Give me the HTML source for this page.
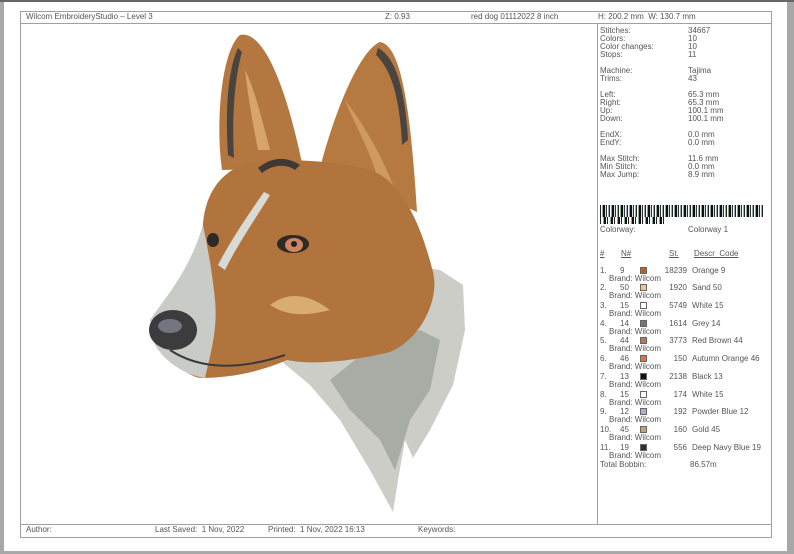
<!DOCTYPE html>
<html><head><meta charset="utf-8"><style>
*{margin:0;padding:0;box-sizing:border-box}
body{width:794px;height:554px;background:#a8a8a8;position:relative;overflow:hidden;font-family:"Liberation Sans",sans-serif;font-size:8px;color:#555}
#page{position:absolute;left:4px;top:2px;width:783px;height:549px;background:#fff}
.t{position:absolute;white-space:nowrap;line-height:8px}
.r{position:absolute;white-space:nowrap;line-height:8px;left:650px;width:37px;text-align:right}
.ln{position:absolute;background:#a0a0a0}
.sw{position:absolute;width:7px;height:7px;border:1px solid #666}
</style></head><body>
<div style="position:absolute;left:0;top:0;width:794px;height:2px;background:#666"></div>
<div id="page"></div>
<div style="position:absolute;left:20px;top:11px;width:752px;height:527px;border:1px solid #a0a0a0"></div>
<div class="ln" style="left:20px;top:23px;width:752px;height:1px"></div>
<div class="ln" style="left:20px;top:524px;width:752px;height:1px"></div>
<div class="ln" style="left:597px;top:23px;width:1px;height:501px"></div>
<div class="t" style="left:26px;top:13px">Wilcom EmbroideryStudio – Level 3</div>
<div class="t" style="left:385px;top:13px">Z: 0.93</div>
<div class="t" style="left:471px;top:13px">red dog 01112022 8 inch</div>
<div class="t" style="left:598px;top:13px">H: 200.2 mm&nbsp;&nbsp;W: 130.7 mm</div>

<div class="t" style="left:600px;top:27px;line-height:8px">Stitches:<br>Colors:<br>Color changes:<br>Stops:<br><br>Machine:<br>Trims:<br><br>Left:<br>Right:<br>Up:<br>Down:<br><br>EndX:<br>EndY:<br><br>Max Stitch:<br>Min Stitch:<br>Max Jump:</div>
<div class="t" style="left:688px;top:27px;line-height:8px">34667<br>10<br>10<br>11<br><br>Tajima<br>43<br><br>65.3 mm<br>65.3 mm<br>100.1 mm<br>100.1 mm<br><br>0.0 mm<br>0.0 mm<br><br>11.6 mm<br>0.0 mm<br>8.9 mm</div>

<div style="position:absolute;left:600px;top:205px;width:164px;height:12px;background:repeating-linear-gradient(90deg,#222 0 1px,#fff 1px 2px,#8a9 2px 3px,#111 3px 5px,#cdd 5px 6px,#333 6px 7px,#fff 7px 8px,#9ab 8px 9px)"></div>
<div style="position:absolute;left:600px;top:217px;width:65px;height:7px;background:repeating-linear-gradient(90deg,#222 0 1px,#fff 1px 3px,#8a9 3px 4px,#111 4px 6px,#fff 6px 7px)"></div>
<div class="t" style="left:600px;top:226px">Colorway:</div>
<div class="t" style="left:688px;top:226px">Colorway 1</div>

<div class="t" style="left:600px;top:250px;text-decoration:underline">#</div>
<div class="t" style="left:621px;top:250px;text-decoration:underline">N#</div>
<div class="t" style="left:669px;top:250px;text-decoration:underline">St.</div>
<div class="t" style="left:694px;top:250px;text-decoration:underline">Descr_Code</div>

<div class="t" style="left:600px;top:461px">Total Bobbin:</div>
<div class="t" style="left:690px;top:461px">86.57m</div>

<div class="t" style="left:26px;top:526px">Author:</div>
<div class="t" style="left:155px;top:526px">Last Saved:&nbsp; 1 Nov, 2022</div>
<div class="t" style="left:268px;top:526px">Printed:&nbsp; 1 Nov, 2022 16:13</div>
<div class="t" style="left:418px;top:526px">Keywords:</div>

<div class="t" style="left:600px;top:267px">1.</div><div class="t" style="left:620px;top:267px">9</div><div class="sw" style="left:640px;top:267px;background:#c0601f"></div><div class="r" style="top:267px">18239</div><div class="t" style="left:692px;top:267px">Orange 9</div><div class="t" style="left:609px;top:275px">Brand: Wilcom</div>
<div class="t" style="left:600px;top:284px">2.</div><div class="t" style="left:620px;top:284px">50</div><div class="sw" style="left:640px;top:284px;background:#f2c58e"></div><div class="r" style="top:284px">1920</div><div class="t" style="left:692px;top:284px">Sand 50</div><div class="t" style="left:609px;top:292px">Brand: Wilcom</div>
<div class="t" style="left:600px;top:302px">3.</div><div class="t" style="left:620px;top:302px">15</div><div class="sw" style="left:640px;top:302px;background:#fff"></div><div class="r" style="top:302px">5749</div><div class="t" style="left:692px;top:302px">White 15</div><div class="t" style="left:609px;top:310px">Brand: Wilcom</div>
<div class="t" style="left:600px;top:320px">4.</div><div class="t" style="left:620px;top:320px">14</div><div class="sw" style="left:640px;top:320px;background:#777"></div><div class="r" style="top:320px">1614</div><div class="t" style="left:692px;top:320px">Grey 14</div><div class="t" style="left:609px;top:328px">Brand: Wilcom</div>
<div class="t" style="left:600px;top:337px">5.</div><div class="t" style="left:620px;top:337px">44</div><div class="sw" style="left:640px;top:337px;background:#b27856"></div><div class="r" style="top:337px">3773</div><div class="t" style="left:692px;top:337px">Red Brown 44</div><div class="t" style="left:609px;top:345px">Brand: Wilcom</div>
<div class="t" style="left:600px;top:355px">6.</div><div class="t" style="left:620px;top:355px">46</div><div class="sw" style="left:640px;top:355px;background:#e4733a"></div><div class="r" style="top:355px">150</div><div class="t" style="left:692px;top:355px">Autumn Orange 46</div><div class="t" style="left:609px;top:363px">Brand: Wilcom</div>
<div class="t" style="left:600px;top:373px">7.</div><div class="t" style="left:620px;top:373px">13</div><div class="sw" style="left:640px;top:373px;background:#111"></div><div class="r" style="top:373px">2138</div><div class="t" style="left:692px;top:373px">Black 13</div><div class="t" style="left:609px;top:381px">Brand: Wilcom</div>
<div class="t" style="left:600px;top:391px">8.</div><div class="t" style="left:620px;top:391px">15</div><div class="sw" style="left:640px;top:391px;background:#fff"></div><div class="r" style="top:391px">174</div><div class="t" style="left:692px;top:391px">White 15</div><div class="t" style="left:609px;top:399px">Brand: Wilcom</div>
<div class="t" style="left:600px;top:408px">9.</div><div class="t" style="left:620px;top:408px">12</div><div class="sw" style="left:640px;top:408px;background:#b0aed0"></div><div class="r" style="top:408px">192</div><div class="t" style="left:692px;top:408px">Powder Blue 12</div><div class="t" style="left:609px;top:416px">Brand: Wilcom</div>
<div class="t" style="left:600px;top:426px">10.</div><div class="t" style="left:620px;top:426px">45</div><div class="sw" style="left:640px;top:426px;background:#c4a46a"></div><div class="r" style="top:426px">160</div><div class="t" style="left:692px;top:426px">Gold 45</div><div class="t" style="left:609px;top:434px">Brand: Wilcom</div>
<div class="t" style="left:600px;top:444px">11.</div><div class="t" style="left:620px;top:444px">19</div><div class="sw" style="left:640px;top:444px;background:#2e2e40"></div><div class="r" style="top:444px">556</div><div class="t" style="left:692px;top:444px">Deep Navy Blue 19</div><div class="t" style="left:609px;top:452px">Brand: Wilcom</div>

<svg style="position:absolute;left:0;top:0" width="794" height="554" viewBox="0 0 794 554">
<path d="M280 360 L330 330 L410 265 L440 270 L463 285 L465 330 L453 385 L430 430 L413 458 L405 440 L398 480 L393 512 L370 470 L340 420 L310 385 Z" fill="#cbcdc6"/>
<path d="M330 380 L380 340 L420 330 L440 340 L430 390 L410 420 L395 470 L380 440 L350 410 Z" fill="#a9aca5"/>
<path d="M222 170 C215 120 222 50 240 35 C262 30 285 80 303 168 Z" fill="#b4773f"/>
<path d="M320 168 C335 110 360 50 380 42 C400 45 410 100 417 212 Z" fill="#b67a41"/>
<path d="M228 155 C225 110 228 70 238 48 L242 52 C234 80 232 120 234 158 Z" fill="#4a4440"/>
<path d="M378 48 C392 55 405 80 408 140 L402 145 C400 100 392 70 376 55 Z" fill="#4a4440"/>
<path d="M245 70 C255 90 262 120 270 150 L258 150 C252 120 248 95 245 70 Z" fill="#d7a56c"/>
<path d="M345 100 C360 120 380 150 395 190 L380 185 C370 150 355 125 345 100 Z" fill="#cf9a5e"/>
<path d="M203 225 C205 195 220 170 250 163 C290 158 330 160 370 170 C400 180 420 220 433 272 C440 300 420 340 390 352 C350 362 310 365 287 360 C260 372 230 378 200 378 C185 375 170 360 165 345 L155 320 C170 300 190 270 203 225 Z" fill="#b2743d"/>
<path d="M203 225 C208 250 212 270 215 300 C218 330 210 355 205 378 C185 375 165 362 155 345 L150 320 C165 298 190 270 203 225 Z" fill="#c8cbc6"/>
<path d="M270 195 C258 215 240 240 225 270 L218 265 C232 238 250 212 264 192 Z" fill="#d8dad6"/>
<path d="M270 305 C290 290 310 295 330 310 C310 315 290 318 270 305 Z" fill="#d9ac72"/>
<ellipse cx="173" cy="330" rx="24" ry="20" fill="#3c3b3d"/>
<ellipse cx="170" cy="326" rx="12" ry="7" fill="#75757d"/>
<path d="M170 350 C200 370 240 370 285 355" stroke="#3a3a3a" stroke-width="2" fill="none"/>
<ellipse cx="293" cy="244" rx="16" ry="9" fill="#2d2a28"/>
<ellipse cx="294" cy="245" rx="9" ry="7" fill="#d08560"/>
<circle cx="294" cy="244" r="3" fill="#222"/>
<ellipse cx="213" cy="240" rx="6" ry="7" fill="#2d2a28"/>
<path d="M258 168 C270 158 285 155 300 165 L295 170 C285 163 272 165 262 173 Z" fill="#3e3935"/>
</svg>
</body></html>
